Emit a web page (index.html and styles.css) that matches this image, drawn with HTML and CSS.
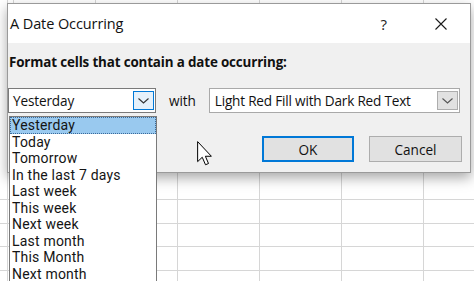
FILE: index.html
```html
<!DOCTYPE html>
<html>
<head>
<meta charset="utf-8">
<link rel="stylesheet" href="styles.css">
</head>
<body>
<div class="screen">
  <div class="dialog">
    <div class="titlebar">
      <span class="title">A Date Occurring</span>
      <span class="help">?</span>
      <span class="close">
        <svg width="12" height="12" viewBox="0 0 12 12"><path d="M0.5 0.5 L11.5 11.5 M11.5 0.5 L0.5 11.5" stroke="#1a1a1a" stroke-width="1.1" fill="none"/></svg>
      </span>
    </div>
    <div class="content">
      <div class="heading">Format cells that contain a date occurring:</div>
      <div class="row">
        <div class="combo combo-date">
          <span class="combo-text">Yesterday</span>
          <span class="drop drop-active">
            <svg width="11" height="6" viewBox="0 0 11 6"><polyline points="0.5,0.5 5.5,5 10.5,0.5" stroke="#333" stroke-width="1.1" fill="none"/></svg>
          </span>
        </div>
        <span class="with">with</span>
        <div class="combo combo-format">
          <span class="combo-text combo-text-format">Light Red Fill with Dark Red Text</span>
          <span class="drop">
            <svg width="11" height="6" viewBox="0 0 11 6"><polyline points="0.5,0.5 5.5,5 10.5,0.5" stroke="#555" stroke-width="1.1" fill="none"/></svg>
          </span>
        </div>
      </div>
      <div class="buttons">
        <button class="btn btn-ok">OK</button>
        <button class="btn">Cancel</button>
      </div>
    </div>
  </div>

  <ul class="listbox">
    <li class="item item-selected">Yesterday</li>
    <li class="item">Today</li>
    <li class="item">Tomorrow</li>
    <li class="item">In the last 7 days</li>
    <li class="item">Last week</li>
    <li class="item">This week</li>
    <li class="item">Next week</li>
    <li class="item">Last month</li>
    <li class="item">This Month</li>
    <li class="item">Next month</li>
  </ul>

  <svg class="cursor" width="15" height="25" viewBox="0 0 12 20">
    <path d="M0.5 0.5 L0.5 16.5 L4.2 13 L6.8 19 L9.2 18 L6.7 12.2 L11.5 12.2 Z" fill="#fff" stroke="#000" stroke-width="0.8" stroke-linejoin="miter"/>
  </svg>
</div>
</body>
</html>
```

FILE: styles.css
```css
* { box-sizing: border-box; }

html, body {
  margin: 0;
  padding: 0;
  background: #fff;
}

.screen {
  position: relative;
  width: 474px;
  height: 281px;
  overflow: hidden;
  font-family: "Open Sans", "Noto Sans", "Liberation Sans", sans-serif;
  color: #111;
  background-color: #fff;
  background-image:
    linear-gradient(to right, #d6d6d6 0 1px, transparent 1px),
    repeating-linear-gradient(to right, transparent 0 13px, #d6d6d6 13px 14px, transparent 14px 82px),
    repeating-linear-gradient(to bottom, transparent 0 22.4px, #d6d6d6 22.4px 23.4px);
  background-size: 1px 100%, 100% 100%, 100% 100%;
  background-position: 7px 0, 0 0, 0 176.6px;
  background-repeat: no-repeat, repeat, repeat-x;
  padding-top: 3px;
}

.dialog {
  margin-left: 7px;
  width: 464px;
  height: 170px;
  border: 1px solid #9a9a9a;
  background: #f0f0f0;
  box-shadow: 0 5px 12px rgba(0, 0, 0, 0.34);
  display: flex;
  flex-direction: column;
}

.titlebar {
  height: 39px;
  background: #fff;
  display: flex;
  align-items: center;
  flex-shrink: 0;
}

.title {
  font-size: 14.5px;
  padding-left: 2px;
  letter-spacing: -0.1px;
  color: #111;
}

.help {
  margin-left: auto;
  font-size: 15px;
  color: #222;
  margin-right: 48px;
}

.close {
  display: flex;
  margin-right: 23px;
}

.content {
  flex: 1;
  display: flex;
  flex-direction: column;
}

.heading {
  font-weight: bold;
  font-size: 13.4px;
  line-height: 20px;
  margin-top: 9px;
  padding-left: 1px;
  letter-spacing: -0.15px;
  color: #111;
}

.row {
  display: flex;
  align-items: center;
  margin-top: 16px;
  height: 25px;
}

.combo {
  height: 25px;
  border: 1px solid #7a7a7a;
  background: #fff;
  display: flex;
  align-items: center;
  padding: 1px;
}

.combo-date {
  width: 148px;
}

.combo-format {
  width: 251px;
  margin-left: 13px;
  border-color: #a9a9a9;
}

.combo-text {
  flex: 1;
  font-size: 13.6px;
  padding-left: 3px;
  letter-spacing: -0.15px;
  white-space: nowrap;
}

.combo-text-format {
  padding-left: 4px;
  letter-spacing: -0.2px;
}

.drop {
  width: 21px;
  height: 19px;
  display: flex;
  align-items: center;
  justify-content: center;
  background: #e1e1e1;
  border: 1px solid #adadad;
}

.drop-active {
  background: #e5f1fb;
  border-color: #0078d7;
}

.with {
  margin-left: 13px;
  font-size: 13.6px;
  letter-spacing: -0.1px;
}

.buttons {
  display: flex;
  justify-content: flex-end;
  gap: 15px;
  margin-top: 23px;
  padding-right: 8px;
}

.btn {
  width: 93px;
  height: 26px;
  background: #e1e1e1;
  border: 1px solid #adadad;
  font-family: inherit;
  font-size: 13.6px;
  color: #111;
  padding: 0;
  margin: 0;
}

.btn-ok {
  width: 92px;
  border: 2px solid #0078d7;
}

.listbox {
  position: absolute;
  left: 9px;
  top: 116px;
  width: 148px;
  height: 180px;
  margin: 0;
  padding: 0;
  list-style: none;
  background: #fff;
  border: 1px solid #7a7a7a;
}

.item {
  height: 16.5px;
  line-height: 16.5px;
  font-family: Roboto, "Open Sans", sans-serif;
  font-size: 14px;
  padding-left: 2px;
  letter-spacing: 0.2px;
  white-space: nowrap;
  color: #141414;
}

.item-selected {
  background: #99c9ef;
  outline: 1px dotted #3a6a9a;
  outline-offset: -1px;
}

.cursor {
  position: absolute;
  left: 197px;
  top: 141px;
}
```
